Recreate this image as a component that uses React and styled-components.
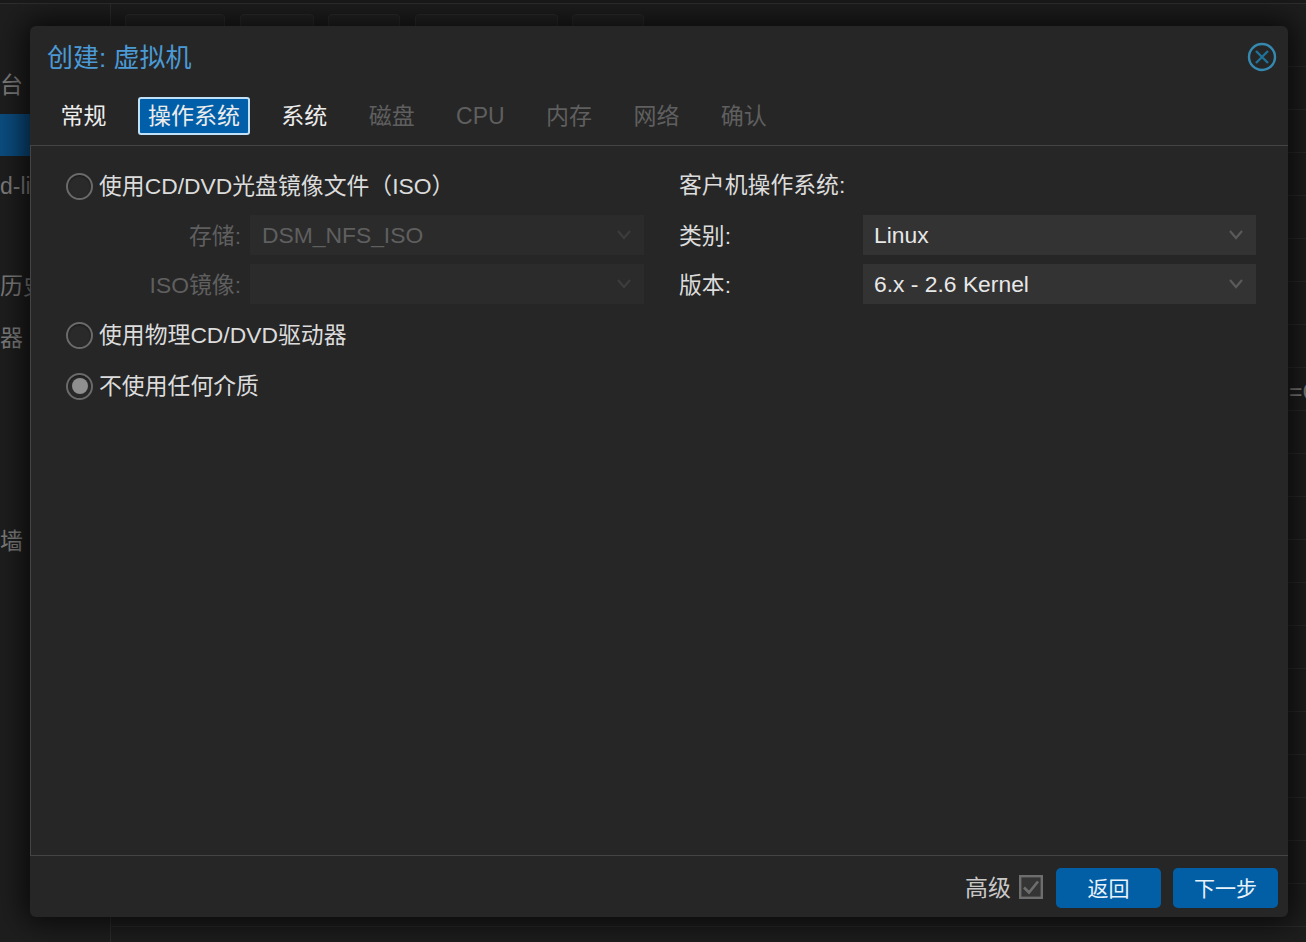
import React from 'react';
import styled, { createGlobalStyle } from 'styled-components';

const FONT = `"Liberation Sans", "Noto Sans CJK SC", sans-serif`;

const Global = createGlobalStyle`
  html, body { margin: 0; padding: 0; background: #1f1f1f; }
  body { font-family: ${FONT}; }
  #root { width: 1306px; height: 942px; overflow: hidden; }
`;

const Page = styled.div`
  position: relative;
  width: 1306px;
  height: 942px;
  overflow: hidden;
  background: #1e1e1e;
  display: flex;
  flex-direction: column;
`;
const TopStrip = styled.div`
  height: 3px;
  flex: none;
  border-bottom: 1px solid #2e2e2e;
  background: #1a1a1a;
`;
const Workspace = styled.div`
  flex: 1;
  display: flex;
  min-height: 0;
`;
const Sidebar = styled.nav`
  width: 110px;
  flex: none;
  border-right: 1px solid #2c2c2c;
  display: flex;
  flex-direction: column;
  color: #7d7d7d;
  font-size: 23px;
  padding-top: 60px;
`;
const SideItem = styled.div`
  height: ${p => p.$h}px;
  line-height: ${p => p.$lh || p.$h}px;
  white-space: nowrap;
  overflow: hidden;
  background: ${p => (p.$active ? '#0b4d80' : 'transparent')};
`;
const Main = styled.main`
  flex: 1;
  display: flex;
  flex-direction: column;
  padding: 10px 0 0 14px;
  min-width: 0;
`;
const PageTabs = styled.div`
  display: flex;
  gap: 14.5px;
  height: 52px;
  flex: none;
`;
const PageTab = styled.div`
  box-sizing: border-box;
  width: ${p => p.$w}px;
  height: 30px;
  border: 1px solid #2c2c2c;
  border-radius: 4px;
  background: #232323;
`;
const GridRows = styled.div`
  display: flex;
  flex-direction: column;
  margin-left: -14px;
  border-top: 1px solid #2a2a2a;
`;
const GridRow = styled.div`
  height: 43px;
  box-sizing: border-box;
  border-bottom: 1px solid #2a2a2a;
  padding: 6px 0 0 1178px;
  line-height: 36px;
  color: #7d7d7d;
  font-size: 23px;
  white-space: nowrap;
  overflow: hidden;
`;

const Dialog = styled.section`
  position: absolute;
  left: 30px;
  top: 26px;
  width: 1258px;
  height: 891px;
  background: #262626;
  border-radius: 6px;
  box-shadow: 0 0 30px 6px rgba(0, 0, 0, 0.72);
  display: flex;
  flex-direction: column;
  color: #e6e6e6;
  font-size: 22.85px;
`;
const DialogHead = styled.header`
  height: 120px;
  flex: none;
  box-sizing: border-box;
  display: flex;
  flex-direction: column;
  border-bottom: 1px solid #444;
`;
const TitleBar = styled.div`
  height: 62px;
  flex: none;
  margin-bottom: 9px;
  padding: 0 11px 0 17px;
  display: flex;
  align-items: center;
  justify-content: space-between;
`;
const Title = styled.h1`
  margin: 0;
  padding-bottom: 4px;
  font-size: 26px;
  font-weight: 400;
  color: #4b9ad6;
`;
const CloseIcon = styled.svg`
  width: 30px;
  height: 30px;
  display: block;
`;
const WizardTabs = styled.div`
  display: flex;
  gap: 21.4px;
  padding-left: 20.5px;
`;
const WizardTab = styled.div`
  box-sizing: border-box;
  height: 38px;
  line-height: ${p => (p.$active ? '34px' : '38px')};
  padding: 0 ${p => (p.$active ? '8px' : '10px')};
  font-size: 23px;
  border-radius: 3px;
  white-space: nowrap;
  color: ${p => (p.$disabled ? '#5f5f5f' : '#ececec')};
  background: ${p => (p.$active ? '#005fa8' : 'transparent')};
  border: ${p => (p.$active ? '2px solid #bfe0f6' : '0')};
`;
const DialogBody = styled.div`
  flex: 1;
  min-height: 0;
  border-left: 1px solid #444;
  display: grid;
  grid-template-columns: 648px 1fr;
  padding-top: 25px;
`;
const LeftColumn = styled.div`
  display: flex;
  flex-direction: column;
  padding-left: 35px;
`;
const RadioRow = styled.label`
  display: flex;
  align-items: center;
  gap: 6px;
  height: 30px;
  margin-top: ${p => p.$mt || 0}px;
  color: #dcdcdc;
  white-space: nowrap;
`;
const RadioText = styled.span`
  padding-bottom: 4px;
`;
const Radio = styled.span`
  box-sizing: border-box;
  width: 27px;
  height: 27px;
  flex: none;
  border-radius: 50%;
  border: 2.5px solid #6a6a6a;
  background: #2a2a2a;
  box-shadow: inset 0 1px 2px rgba(0, 0, 0, 0.5);
  display: flex;
  align-items: center;
  justify-content: center;
  &::after {
    content: '';
    display: ${p => (p.$checked ? 'block' : 'none')};
    width: 16px;
    height: 16px;
    border-radius: 50%;
    background: #8f8f8f;
  }
`;
const FieldRow = styled.div`
  display: grid;
  grid-template-columns: ${p => p.$cols};
  column-gap: ${p => p.$gap}px;
  align-items: center;
  height: 40px;
  margin-top: ${p => p.$mt}px;
`;
const FieldLabel = styled.div`
  text-align: ${p => (p.$right ? 'right' : 'left')};
  white-space: nowrap;
  padding-bottom: 2px;
  color: ${p => (p.$disabled ? '#5f5f5f' : '#dcdcdc')};
`;
const Select = styled.div`
  height: 40px;
  box-sizing: border-box;
  padding: 0 11px 0 ${p => (p.$disabled ? 12 : 11)}px;
  display: flex;
  align-items: center;
  justify-content: space-between;
  background: ${p => (p.$disabled ? '#2b2b2b' : '#333333')};
  color: ${p => (p.$disabled ? '#5f5f5f' : '#e8e8e8')};
`;
const Chevron = styled.svg`
  width: 18px;
  height: 12px;
  flex: none;
`;
const RightColumn = styled.div`
  display: flex;
  flex-direction: column;
`;
const OsHeading = styled.div`
  height: 30px;
  line-height: 28px;
  color: #dcdcdc;
`;
const DialogFoot = styled.footer`
  height: 58px;
  flex: none;
  border-top: 1px solid #444;
  display: flex;
  align-items: center;
  justify-content: flex-end;
  padding: 3px 10px 0 0;
`;
const AdvancedLabel = styled.span`
  color: #c8c8c8;
  font-size: 23px;
  margin-right: 8px;
  padding-bottom: 4px;
`;
const CheckIcon = styled.svg`
  width: 24px;
  height: 24px;
  display: block;
  margin: 0 13px 2px 0;
`;
const Button = styled.button`
  width: 105px;
  height: 40px;
  padding: 0 0 3px;
  border: 0;
  border-radius: 5px;
  background: #035fa5;
  color: #e8f2fa;
  font-family: ${FONT};
  font-size: 21px;
  & + & { margin-left: 12px; }
`;

const DownChevron = ({ color }) => (
  <Chevron viewBox="0 0 18 12" fill="none" stroke={color} strokeWidth="2.2">
    <path d="M3 2l6 7 6-7" />
  </Chevron>
);

const tabs = [
  { t: '常规' },
  { t: '操作系统', active: true },
  { t: '系统' },
  { t: '磁盘', disabled: true },
  { t: 'CPU', disabled: true },
  { t: '内存', disabled: true },
  { t: '网络', disabled: true },
  { t: '确认', disabled: true },
];

const sideItems = [
  { t: '台', h: 50, lh: 42 },
  { t: '', h: 42, active: true },
  { t: 'd-lin', h: 60 },
  { t: '', h: 40 },
  { t: '历史', h: 60 },
  { t: '器', h: 44 },
  { t: '', h: 158 },
  { t: '墙', h: 46 },
];

export default function App() {
  return (
    <Page>
      <Global />
      <TopStrip />
      <Workspace>
        <Sidebar>
          {sideItems.map((s, i) => (
            <SideItem key={i} $h={s.h} $lh={s.lh} $active={s.active}>{s.t}</SideItem>
          ))}
        </Sidebar>
        <Main>
          <PageTabs>
            <PageTab $w={100} />
            <PageTab $w={74} />
            <PageTab $w={72} />
            <PageTab $w={143} />
            <PageTab $w={72} />
          </PageTabs>
          <GridRows>
            {Array.from({ length: 20 }, (_, i) => (
              <GridRow key={i}>{i === 7 ? '=C' : ''}</GridRow>
            ))}
          </GridRows>
        </Main>
      </Workspace>

      <Dialog>
        <DialogHead>
          <TitleBar>
            <Title>创建: 虚拟机</Title>
            <CloseIcon viewBox="0 0 30 30" fill="none">
              <circle cx="15" cy="15" r="13" stroke="#3589b0" strokeWidth="2.4" />
              <path d="M9 9l12 12M21 9l-12 12" stroke="#1f7298" strokeWidth="2.4" />
            </CloseIcon>
          </TitleBar>
          <WizardTabs>
            {tabs.map(x => (
              <WizardTab key={x.t} $active={x.active} $disabled={x.disabled}>{x.t}</WizardTab>
            ))}
          </WizardTabs>
        </DialogHead>

        <DialogBody>
          <LeftColumn>
            <RadioRow><Radio /><RadioText>使用CD/DVD光盘镜像文件（ISO）</RadioText></RadioRow>
            <FieldRow $cols="175px 394px" $gap={9} $mt={14}>
              <FieldLabel $right $disabled>存储:</FieldLabel>
              <Select $disabled>DSM_NFS_ISO<DownChevron color="#3c3c3c" /></Select>
            </FieldRow>
            <FieldRow $cols="175px 394px" $gap={9} $mt={9}>
              <FieldLabel $right $disabled>ISO镜像:</FieldLabel>
              <Select $disabled><span /><DownChevron color="#3c3c3c" /></Select>
            </FieldRow>
            <RadioRow $mt={16}><Radio /><RadioText>使用物理CD/DVD驱动器</RadioText></RadioRow>
            <RadioRow $mt={21}><Radio $checked /><RadioText>不使用任何介质</RadioText></RadioRow>
          </LeftColumn>
          <RightColumn>
            <OsHeading>客户机操作系统:</OsHeading>
            <FieldRow $cols="184px 393px" $gap={0} $mt={14}>
              <FieldLabel>类别:</FieldLabel>
              <Select>Linux<DownChevron color="#5a5a5a" /></Select>
            </FieldRow>
            <FieldRow $cols="184px 393px" $gap={0} $mt={9}>
              <FieldLabel>版本:</FieldLabel>
              <Select>6.x - 2.6 Kernel<DownChevron color="#5a5a5a" /></Select>
            </FieldRow>
          </RightColumn>
        </DialogBody>

        <DialogFoot>
          <AdvancedLabel>高级</AdvancedLabel>
          <CheckIcon viewBox="0 0 24 24" fill="none">
            <rect x="1.2" y="1.2" width="21.6" height="21.6" fill="#353535" stroke="#6e6e6e" strokeWidth="2.4" />
            <path d="M5 12.5l5 5 9-11" stroke="#6e6e6e" strokeWidth="2.6" />
          </CheckIcon>
          <Button>返回</Button>
          <Button>下一步</Button>
        </DialogFoot>
      </Dialog>
    </Page>
  );
}
